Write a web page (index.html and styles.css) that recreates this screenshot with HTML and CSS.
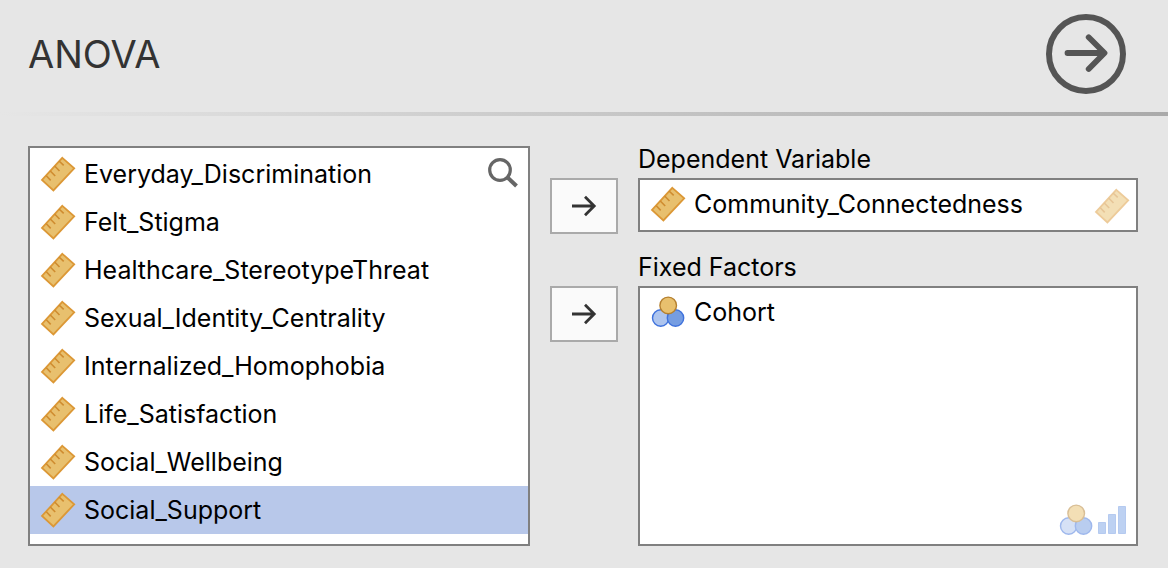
FILE: index.html
```html
<!DOCTYPE html>
<html lang="en">

<head>
    <meta charset="UTF-8">
    <meta name="viewport" content="width=device-width, initial-scale=1.0">
    <title>ANOVA</title>
    <link rel="stylesheet" href="styles.css">
</head>

<body>
    <!-- shared icons -->
    <svg class="sprite" aria-hidden="true">
        <symbol id="continuous" viewBox="0 0 36 36">
            <path d="M22.3 1.8 L34.2 12.3 L13.4 34.4 L2 24 Z" fill="#e8c06e" stroke="#dc9836" stroke-width="1.8"/>
            <path d="M19 5 L23.7 9.4 M14.7 10 L19.5 15 M10.3 15 L15.2 20 M6.3 19.8 L10.7 24.4" fill="none" stroke="#cf8c30" stroke-width="1.6"/>
        </symbol>
        <symbol id="nominal" viewBox="0 0 36 36">
            <circle cx="10.7" cy="24" r="8.2" fill="#aec5ee" stroke="#3f72dc" stroke-width="1.4"/>
            <circle cx="25.5" cy="24" r="8.2" fill="#759de2" stroke="#3f72dc" stroke-width="1.4"/>
            <circle cx="18.2" cy="11.4" r="8.3" fill="#e8c06e" stroke="#b58030" stroke-width="1.4"/>
        </symbol>
        <symbol id="ordinal" viewBox="0 0 36 36">
            <path d="M4.5 20.5 h7 v11 h-7 Z M14.5 12.5 h7 v19 h-7 Z M24.5 4.5 h7 v27 h-7 Z" fill="#7ea4e6" stroke="#6d96e2"/>
        </symbol>
        <symbol id="arrow" viewBox="0 0 28 28">
            <path d="M2 14 H24 M15 4.800 L24.200 14 L15 23.200" fill="none" stroke="#333" stroke-width="2.800"/>
        </symbol>
    </svg>

    <header class="titlebar">
        <h1>ANOVA</h1>
        <button class="hide-button" type="button" aria-label="Hide options">
            <svg viewBox="0 0 80 80">
                <circle cx="40" cy="40" r="37" stroke-width="6"/>
                <path d="M21.500 39 H58 M42.700 23.300 L58.500 39 L42.700 55" stroke-width="5.800" stroke-linecap="round" stroke-linejoin="round"/>
            </svg>
        </button>
    </header>

    <main class="options">
        <div class="supplier">
            <ul class="variables" role="listbox" aria-label="Variables">
                <li role="option" aria-selected="false"><svg class="icon"><use href="#continuous"/></svg>Everyday_Discrimination</li>
                <li role="option" aria-selected="false"><svg class="icon"><use href="#continuous"/></svg>Felt_Stigma</li>
                <li role="option" aria-selected="false"><svg class="icon"><use href="#continuous"/></svg>Healthcare_StereotypeThreat</li>
                <li role="option" aria-selected="false"><svg class="icon"><use href="#continuous"/></svg>Sexual_Identity_Centrality</li>
                <li role="option" aria-selected="false"><svg class="icon"><use href="#continuous"/></svg>Internalized_Homophobia</li>
                <li role="option" aria-selected="false"><svg class="icon"><use href="#continuous"/></svg>Life_Satisfaction</li>
                <li role="option" aria-selected="false"><svg class="icon"><use href="#continuous"/></svg>Social_Wellbeing</li>
                <li class="selected" role="option" aria-selected="true"><svg class="icon"><use href="#continuous"/></svg>Social_Support</li>
            </ul>
            <button class="search-button" type="button" aria-label="Search variables">
                <svg viewBox="0 0 32 32">
                    <circle cx="14" cy="14" r="10.300" stroke-width="3.200"/>
                    <path d="M21 21 L30.500 30" stroke-width="4"/>
                </svg>
            </button>
        </div>

        <div class="targets">
            <section class="target">
                <h2 id="dep-label">Dependent Variable</h2>
                <button class="assign" type="button" aria-label="Assign dependent variable"><svg><use href="#arrow"/></svg></button>
                <div class="box">
                    <ul class="variables" role="listbox" aria-labelledby="dep-label">
                        <li role="option" aria-selected="false"><svg class="icon"><use href="#continuous"/></svg>Community_Connectedness</li>
                    </ul>
                    <div class="permitted">
                        <svg class="icon"><use href="#continuous"/></svg>
                    </div>
                </div>
            </section>

            <section class="target factors">
                <h2 id="factors-label">Fixed Factors</h2>
                <button class="assign" type="button" aria-label="Assign fixed factors"><svg><use href="#arrow"/></svg></button>
                <div class="box">
                    <ul class="variables" role="listbox" aria-labelledby="factors-label">
                        <li role="option" aria-selected="false"><svg class="icon"><use href="#nominal"/></svg>Cohort</li>
                    </ul>
                    <div class="permitted">
                        <svg class="icon"><use href="#nominal"/></svg>
                        <svg class="icon"><use href="#ordinal"/></svg>
                    </div>
                </div>
            </section>
        </div>
    </main>
</body>

</html>
```
FILE: styles.css
```css
* {
    box-sizing: border-box;
}

body {
    margin: 0;
    background-color: #e6e6e6;
    color: #000;
    font-family: Inter, "Liberation Sans", sans-serif;
    font-size: 25px;
}

button {
    padding: 0;
    border: none;
    background: none;
    cursor: pointer;
}

svg {
    display: block;
}

.sprite {
    display: none;
}

/* title bar */
.titlebar {
    display: flex;
    align-items: center;
    justify-content: space-between;
    padding: 14px 42px 18px 28px;
    position: relative;
}

.titlebar::after {
    content: "";
    position: absolute;
    top: 100%;
    left: 0;
    right: 0;
    height: 4px;
    background: linear-gradient(to right, #e6e6e6, #aaa);
}

.titlebar h1 {
    margin: 0;
    color: #333;
    font-size: 38px;
    font-weight: 400;
    line-height: 48px;
}

.hide-button svg {
    width: 80px;
    height: 80px;
    fill: none;
    stroke: #555;
}

/* variable lists */
.options {
    display: grid;
    grid-template-columns: 502fr 588fr;
    gap: 20px;
    padding: 34px 30px 22px 28px;
}

.supplier,
.box {
    position: relative;
    border: 2px solid #808080;
    background-color: #fff;
}

.supplier {
    padding: 2px 0 10px;
}

.variables {
    margin: 0;
    padding: 0;
    list-style: none;
}

.variables li {
    display: flex;
    align-items: center;
    gap: 8px;
    height: 48px;
    padding: 0 10px;
    white-space: nowrap;
}

.variables .selected {
    background-color: #b8c8ea;
}

.icon {
    flex: none;
    width: 36px;
    height: 36px;
}

.search-button {
    position: absolute;
    top: 8px;
    right: 10px;
}

.search-button svg {
    width: 32px;
    height: 32px;
    fill: none;
    stroke: #666;
}

/* targets */
.targets {
    display: flex;
    flex-direction: column;
    gap: 20px;
}

.target {
    display: grid;
    grid-template-columns: 68px 1fr;
    grid-template-rows: auto 1fr;
    column-gap: 20px;
}

.target h2 {
    grid-column: 2;
    margin: 0;
    padding-bottom: 6px;
    font-size: 25px;
    font-weight: 400;
    line-height: 26px;
}

.assign {
    display: flex;
    align-items: center;
    justify-content: center;
    height: 56px;
    border: 2px solid #aaa;
    background-color: #fafafa;
}

.assign svg {
    width: 28px;
    height: 28px;
}

.box {
    align-self: start;
    min-height: 54px;
}

.factors {
    flex: 1;
}

.factors .box {
    align-self: stretch;
}

/* faded icons of the variable types a box accepts */
.permitted {
    display: flex;
    position: absolute;
    right: 6px;
    bottom: 6px;
    opacity: 0.5;
}
```
